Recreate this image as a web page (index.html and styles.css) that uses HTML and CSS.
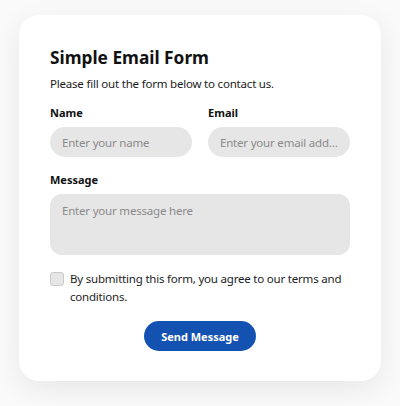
FILE: index.html
```html
<!DOCTYPE html>
<html lang="en">
<head>
  <meta charset="UTF-8">
  <title>Simple Email Form</title>
  <link rel="stylesheet" href="styles.css">
</head>
<body>

  <!-- Contact card -->
  <form class="card" onsubmit="return false;">
    <h1>Simple Email Form</h1>
    <p class="intro">Please fill out the form below to contact us.</p>

    <div class="row">
      <div class="field">
        <label for="name">Name</label>
        <input type="text" id="name" placeholder="Enter your name">
      </div>
      <div class="field">
        <label for="email">Email</label>
        <input type="email" id="email" placeholder="Enter your email address">
      </div>
    </div>

    <div class="field">
      <label for="message">Message</label>
      <textarea id="message" placeholder="Enter your message here"></textarea>
    </div>

    <div class="agree">
      <input type="checkbox" id="agree">
      <label for="agree">By submitting this form, you agree to our terms and conditions.</label>
    </div>

    <div class="actions">
      <button type="submit" class="send-button">Send Message</button>
    </div>
  </form>

</body>
</html>
```

FILE: styles.css
```css
* {
  box-sizing: border-box;
  margin: 0;
  padding: 0;
}

body {
  font-family: 'Noto Sans', Arial, sans-serif;
  background: #fafafa;
  color: #1c1c1c;
  padding: 15px 19px 24px;
}

.card {
  background: #fff;
  border-radius: 20px;
  padding: 31px 31px 30px;
  box-shadow: 0 8px 28px rgba(0, 0, 0, 0.08);
}

h1 {
  font-size: 17.3px;
  line-height: 24px;
  font-weight: bold;
  color: #111;
  margin-bottom: 5px;
}

.intro {
  font-size: 11.5px;
  line-height: 18px;
  letter-spacing: -0.2px;
  margin-bottom: 12px;
}

.row {
  display: grid;
  grid-template-columns: 1fr 1fr;
  gap: 16px;
}

.field {
  margin-bottom: 15px;
}

.field label {
  display: block;
  font-size: 11px;
  line-height: 16px;
  font-weight: bold;
  color: #111;
  margin-bottom: 6px;
}

.field input,
.field textarea {
  width: 100%;
  border: none;
  outline: none;
  background: #e6e6e6;
  font-family: inherit;
  font-size: 11.5px;
  letter-spacing: -0.2px;
  color: #222;
}

.field input {
  height: 30px;
  border-radius: 15px;
  padding: 0 12px;
  text-overflow: ellipsis;
}

.field textarea {
  display: block;
  height: 61px;
  border-radius: 12px;
  padding: 8px 12px;
  line-height: 18px;
  resize: none;
}

::placeholder {
  color: #8a8a8a;
}

.agree {
  display: flex;
  align-items: flex-start;
  gap: 6px;
  margin-top: 3px;
  font-size: 11.5px;
  line-height: 18px;
  letter-spacing: -0.2px;
}

.agree input {
  appearance: none;
  flex: none;
  width: 14px;
  height: 14px;
  margin-top: 2px;
  background: #e6e6e6;
  border: 1px solid #c9c9c9;
  border-radius: 3px;
}

.actions {
  display: flex;
  justify-content: center;
  margin-top: 15px;
}

.send-button {
  width: 112px;
  height: 30px;
  border: none;
  border-radius: 15px;
  background: #1352b1;
  color: #fff;
  font-family: inherit;
  font-size: 11px;
  font-weight: bold;
  cursor: pointer;
}
```
